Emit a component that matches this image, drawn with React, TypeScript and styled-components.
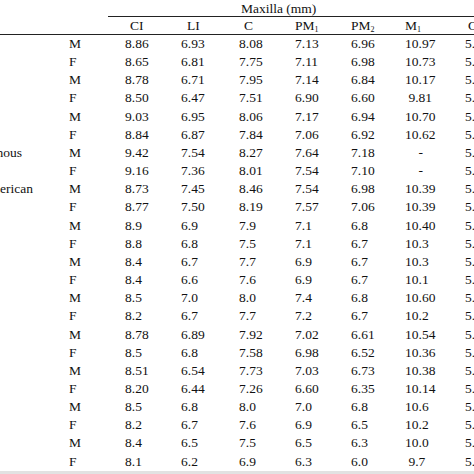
import React from "react";
import styled, { createGlobalStyle } from "styled-components";

const GlobalStyle = createGlobalStyle`
    html, body {
        margin: 0;
        padding: 0;
        background: #ffffff;
    }
`;

// column widths, first one starts off the left edge of the page
const COLUMNS = "135px 56px 56px 58px 56px 56px 54px 60px 60px";

const Page = styled.div`
    width: 474px;
    height: 474px;
    overflow: hidden;
    background: #ffffff;
    display: flex;
    flex-direction: column;
    font-family: "Liberation Serif", "Times New Roman", serif;
    font-size: 13.5px;
    color: #111111;
`;

const Table = styled.div`
    margin-left: -66px;
    width: 610px;
    display: flex;
    flex-direction: column;
    flex: 1;
`;

const TitleRow = styled.div`
    display: flex;
    height: 17px;
`;

const TitleSpacer = styled.div`
    width: 174px;
    flex: none;
`;

const TitleCell = styled.div`
    flex: 1;
    border-bottom: 1px solid #222222;
    padding-left: 133px;
    line-height: 18px;
`;

const HeadRow = styled.div`
    display: grid;
    grid-template-columns: ${COLUMNS};
    height: 17px;
    border-bottom: 1px solid #222222;
    line-height: 18px;
`;

const HeadCell = styled.div<{ $shift?: number }>`
    padding-left: ${(p) => p.$shift ?? 0}px;
    white-space: nowrap;
`;

const Row = styled.div`
    display: grid;
    grid-template-columns: ${COLUMNS};
    height: 18.17px;
    line-height: 18.17px;
`;

const Cell = styled.div<{ $shift?: number }>`
    padding-left: ${(p) => p.$shift ?? 0}px;
    white-space: pre;
`;

const Footer = styled.div`
    height: 4px;
    background: #e2e2e2;
    flex: none;
`;

const Sub = styled.sub`
    font-size: 8px;
    vertical-align: -2px;
    line-height: 0;
`;

type Line = [string, string, string, string, string, string, string, string, string, number?];

const rows: Line[] = [
    ["", "M", "8.86", "6.93", "8.08", "7.13", "6.96", "10.97", "5.62"],
    ["", "F", "8.65", "6.81", "7.75", "7.11", "6.98", "10.73", "5.48"],
    ["", "M", "8.78", "6.71", "7.95", "7.14", "6.84", "10.17", "5.55"],
    ["", "F", "8.50", "6.47", "7.51", "6.90", "6.60", "\u00a09.81", "5.41"],
    ["", "M", "9.03", "6.95", "8.06", "7.17", "6.94", "10.70", "5.60"],
    ["", "F", "8.84", "6.87", "7.84", "7.06", "6.92", "10.62", "5.52"],
    ["Indigenous", "M", "9.42", "7.54", "8.27", "7.64", "7.18", "\u00a0\u00a0\u00a0\u00a0-", "5.83", 28],
    ["", "F", "9.16", "7.36", "8.01", "7.54", "7.10", "\u00a0\u00a0\u00a0\u00a0-", "5.71"],
    ["African American", "M", "8.73", "7.45", "8.46", "7.54", "6.98", "10.39", "5.69", 2],
    ["", "F", "8.77", "7.50", "8.19", "7.57", "7.06", "10.39", "5.58"],
    ["", "M", "8.9", "6.9", "7.9", "7.1", "6.8", "10.40", "5.5"],
    ["", "F", "8.8", "6.8", "7.5", "7.1", "6.7", "10.3", "5.4"],
    ["", "M", "8.4", "6.7", "7.7", "6.9", "6.7", "10.3", "5.5"],
    ["", "F", "8.4", "6.6", "7.6", "6.9", "6.7", "10.1", "5.3"],
    ["", "M", "8.5", "7.0", "8.0", "7.4", "6.8", "10.60", "5.6"],
    ["", "F", "8.2", "6.7", "7.7", "7.2", "6.7", "10.2", "5.4"],
    ["", "M", "8.78", "6.89", "7.92", "7.02", "6.61", "10.54", "5.47"],
    ["", "F", "8.5", "6.8", "7.58", "6.98", "6.52", "10.36", "5.39"],
    ["", "M", "8.51", "6.54", "7.73", "7.03", "6.73", "10.38", "5.44"],
    ["", "F", "8.20", "6.44", "7.26", "6.60", "6.35", "10.14", "5.31"],
    ["", "M", "8.5", "6.8", "8.0", "7.0", "6.8", "10.6", "5.5"],
    ["", "F", "8.2", "6.7", "7.6", "6.9", "6.5", "10.2", "5.4"],
    ["", "M", "8.4", "6.5", "7.5", "6.5", "6.3", "10.0", "5.3"],
    ["", "F", "8.1", "6.2", "6.9", "6.3", "6.0", "\u00a09.7", "5.2"],
];

const App = () => {
    return (
        <Page>
            <GlobalStyle />
            <Table>
                <TitleRow>
                    <TitleSpacer />
                    <TitleCell>Maxilla (mm)</TitleCell>
                </TitleRow>
                <HeadRow>
                    <HeadCell />
                    <HeadCell />
                    <HeadCell $shift={5}>CI</HeadCell>
                    <HeadCell $shift={6}>LI</HeadCell>
                    <HeadCell $shift={5}>C</HeadCell>
                    <HeadCell>
                        PM<Sub>1</Sub>
                    </HeadCell>
                    <HeadCell>
                        PM<Sub>2</Sub>
                    </HeadCell>
                    <HeadCell>
                        M<Sub>1</Sub>
                    </HeadCell>
                    <HeadCell $shift={3}>CI</HeadCell>
                </HeadRow>
                {rows.map((r, i) => (
                    <Row key={i}>
                        <Cell $shift={r[9] ?? 0}>{r[0]}</Cell>
                        {r.slice(1, 9).map((v, j) => (
                            <Cell key={j}>{v}</Cell>
                        ))}
                    </Row>
                ))}
            </Table>
            <Footer />
        </Page>
    );
};

export default App;
